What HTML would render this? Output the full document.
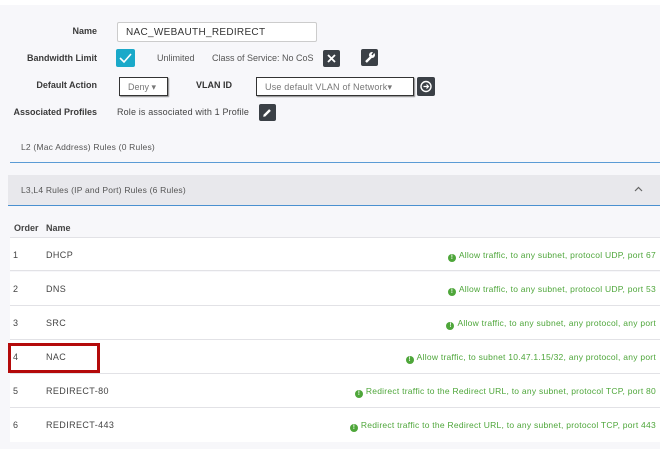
<!DOCTYPE html>
<html><head><meta charset="utf-8"><style>
*{margin:0;padding:0;box-sizing:border-box}
body{width:660px;height:449px;background:#f7f7fa;font-family:"Liberation Sans",sans-serif;font-size:9px;color:#333;position:relative;overflow:hidden}
.a{position:absolute;white-space:nowrap}
.lbl{font-weight:bold;color:#3a3a3a;text-align:right;width:97px}
.btn{position:absolute;width:17px;height:17px;background:#3b4046;border-radius:2px}
.row{position:absolute;left:10px;width:650px;height:34px;background:#fff;border-bottom:1px solid #e2e2e6}
.row .o{position:absolute;left:3px;top:12px;color:#444}
.row .n{position:absolute;left:36px;top:12px;color:#444;letter-spacing:.4px}
.row .d{position:absolute;right:4px;top:12px;color:#4ea63a;font-size:8.5px;letter-spacing:.25px}
.i{display:inline-block;width:8px;height:8px;border-radius:50%;background:#4ea63a;vertical-align:-1px;margin-right:3px;color:#fff;font-size:6px;font-weight:bold;text-align:center;line-height:8px;letter-spacing:0}
</style></head><body>
<div style="position:absolute;left:0;top:0;width:660px;height:5px;background:#fff"></div>
<div class="a lbl" style="left:0;top:26px">Name</div>
<div class="a" style="left:117px;top:22px;width:200px;height:20px;background:#fff;border:1px solid #ccc;border-radius:2px;padding:4px 8px;font-size:10px;letter-spacing:.3px;color:#333">NAC_WEBAUTH_REDIRECT</div>
<div class="a lbl" style="left:0;top:53px">Bandwidth Limit</div>
<div class="a" style="left:116px;top:49px;width:19px;height:18px;background:#1aa9c9;border-radius:2px"><svg width="19" height="18"><path d="M4 9 L8 13 L15 5" stroke="#fff" stroke-width="1.6" fill="none"/></svg></div>
<div class="a" style="left:157px;top:53px;color:#555">Unlimited</div>
<div class="a" style="left:212px;top:53px;color:#555">Class of Service: No CoS</div>
<div class="btn" style="left:323px;top:50px"><svg width="17" height="17"><path d="M5 5L12 12M12 5L5 12" stroke="#fff" stroke-width="1.8"/></svg></div>
<div class="btn" style="left:361px;top:49px"><svg width="17" height="17"><path d="M5 13L10 8" stroke="#fff" stroke-width="2.4"/><circle cx="11" cy="6" r="3" fill="#fff"/><path d="M11 6L13 3" stroke="#3b4046" stroke-width="1.5"/></svg></div>
<div class="a lbl" style="left:0;top:80px">Default Action</div>
<div class="a" style="left:119px;top:77px;width:49px;height:19px;background:#fff;border:1px solid #333;box-shadow:1px 1px 1px #888;padding:4px 8px;color:#777">Deny ▾</div>
<div class="a" style="left:196px;top:80px;font-weight:bold">VLAN ID</div>
<div class="a" style="left:256px;top:77px;width:158px;height:19px;background:#fff;border:1px solid #333;box-shadow:1px 1px 1px #888;padding:4px 8px;color:#777;letter-spacing:.2px">Use default VLAN of Network▾</div>
<div class="btn" style="left:417px;top:77px;width:18px;height:19px"><svg width="18" height="19"><circle cx="9" cy="9.5" r="5" stroke="#fff" stroke-width="1.4" fill="none"/><path d="M6.5 9.5H11.5M9.5 7.5L11.5 9.5L9.5 11.5" stroke="#fff" stroke-width="1.2" fill="none"/></svg></div>
<div class="a lbl" style="left:0;top:107px">Associated Profiles</div>
<div class="a" style="left:117px;top:107px;color:#444;letter-spacing:.15px">Role is associated with 1 Profile</div>
<div class="btn" style="left:259px;top:104px"><svg width="17" height="17"><path d="M5 12L11 6" stroke="#fff" stroke-width="2.4"/><path d="M4 13L5 11L6 12Z" fill="#fff"/></svg></div>
<div class="a" style="left:21px;top:142px;color:#555;font-size:8.5px;letter-spacing:.2px">L2 (Mac Address) Rules (0 Rules)</div>
<div class="a" style="left:10px;top:162px;width:650px;height:1px;background:#5b9bd5"></div>
<div class="a" style="left:8px;top:175px;width:652px;height:31px;background:#e8e8ec;border-bottom:1px solid #4a90d0"></div>
<div class="a" style="left:21px;top:185px;color:#555;font-size:8.5px;letter-spacing:.2px">L3,L4 Rules (IP and Port) Rules (6 Rules)</div>
<svg class="a" style="left:634px;top:186px" width="9" height="6"><path d="M1 5L4.5 1.5L8 5" stroke="#666" stroke-width="1.2" fill="none"/></svg>
<div class="a" style="left:14px;top:223px;font-weight:bold;color:#444">Order</div>
<div class="a" style="left:46px;top:223px;font-weight:bold;color:#444">Name</div>
<div class="row" style="top:237px;border-top:1px solid #e2e2e6"><span class="o">1</span><span class="n">DHCP</span><span class="d"><span class="i">!</span>Allow traffic, to any subnet, protocol UDP, port 67</span></div>
<div class="row" style="top:272px"><span class="o">2</span><span class="n">DNS</span><span class="d"><span class="i">!</span>Allow traffic, to any subnet, protocol UDP, port 53</span></div>
<div class="row" style="top:306px"><span class="o">3</span><span class="n">SRC</span><span class="d"><span class="i">!</span>Allow traffic, to any subnet, any protocol, any port</span></div>
<div class="row" style="top:340px"><span class="o">4</span><span class="n">NAC</span><span class="d"><span class="i">!</span>Allow traffic, to subnet 10.47.1.15/32, any protocol, any port</span></div>
<div class="row" style="top:374px"><span class="o">5</span><span class="n">REDIRECT-80</span><span class="d"><span class="i">!</span>Redirect traffic to the Redirect URL, to any subnet, protocol TCP, port 80</span></div>
<div class="row" style="top:408px;border-bottom:none"><span class="o">6</span><span class="n">REDIRECT-443</span><span class="d"><span class="i">!</span>Redirect traffic to the Redirect URL, to any subnet, protocol TCP, port 443</span></div>
<div class="a" style="left:8px;top:343px;width:92px;height:30px;border:3px solid #b40a0a"></div>
</body></html>
